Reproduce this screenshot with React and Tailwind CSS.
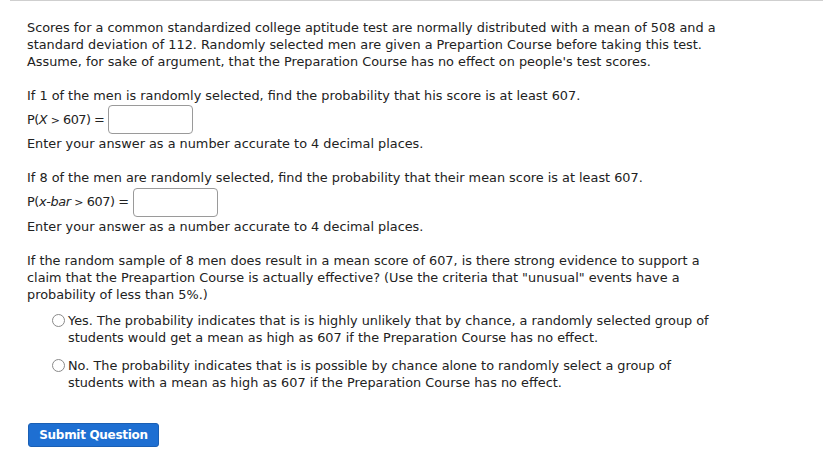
import React, { useState } from 'react';

const Answer = () => (
  <input
    type="text"
    className="w-[85px] h-[29px] border border-[#9a9a9a] rounded-[4px] bg-white ml-[4px] outline-none"
  />
);

const Option = ({ checked, onSelect, children }) => (
  <label className="flex items-start pl-[25px] cursor-pointer" onClick={onSelect}>
    <span className="mt-[2px] mr-[3px] w-[13px] h-[13px] rounded-full border border-[#8a8a8a] bg-white flex items-center justify-center shrink-0">
      {checked && <span className="w-[7px] h-[7px] rounded-full bg-[#333]" />}
    </span>
    <span className="block">{children}</span>
  </label>
);

export default function App() {
  const [choice, setChoice] = useState(null);

  return (
    <div className="min-h-[467px] bg-white text-[#222] text-[12.85px] leading-[17px] font-['DejaVu_Sans',Verdana,sans-serif]">
      <div className="ml-[10px] h-px bg-[#cfcfcf]" />
      <div className="pl-[27px] pt-[18px] whitespace-nowrap">
        <p>
          Scores for a common standardized college aptitude test are normally distributed with a mean of 508 and a<br />
          standard deviation of 112. Randomly selected men are given a Prepartion Course before taking this test.<br />
          Assume, for sake of argument, that the Preparation Course has no effect on people's test scores.
        </p>

        <p className="mt-[17px]">If 1 of the men is randomly selected, find the probability that his score is at least 607.</p>
        <div className="flex items-center h-[31px]">
          <span className="tracking-[-0.5px]">P(<i>X</i> <span className="text-[11px]">&gt;</span> 607) =</span>
          <Answer />
        </div>
        <p>Enter your answer as a number accurate to 4 decimal places.</p>

        <p className="mt-[17px]">If 8 of the men are randomly selected, find the probability that their mean score is at least 607.</p>
        <div className="flex items-center h-[32px]">
          <span className="tracking-[-0.4px]">P(<i>x-bar</i> <span className="text-[11px]">&gt;</span> 607) =</span>
          <Answer />
        </div>
        <p>Enter your answer as a number accurate to 4 decimal places.</p>

        <p className="mt-[17px]">
          If the random sample of 8 men does result in a mean score of 607, is there strong evidence to support a<br />
          claim that the Preapartion Course is actually effective? (Use the criteria that "unusual" events have a<br />
          probability of less than 5%.)
        </p>

        <div className="mt-[9px]">
          <Option checked={choice === 'yes'} onSelect={() => setChoice('yes')}>
            Yes. The probability indicates that is is highly unlikely that by chance, a randomly selected group of<br />
            students would get a mean as high as 607 if the Preparation Course has no effect.
          </Option>
          <div className="mt-[11px]">
            <Option checked={choice === 'no'} onSelect={() => setChoice('no')}>
              No. The probability indicates that is is possible by chance alone to randomly select a group of<br />
              students with a mean as high as 607 if the Preparation Course has no effect.
            </Option>
          </div>
        </div>

        <button className="mt-[32px] ml-px w-[131px] h-[24px] rounded-[3px] bg-[#1e6fd2] border border-[#1a5fb4] text-white font-bold text-[12px] tracking-[-0.3px]">
          Submit Question
        </button>
      </div>
    </div>
  );
}
